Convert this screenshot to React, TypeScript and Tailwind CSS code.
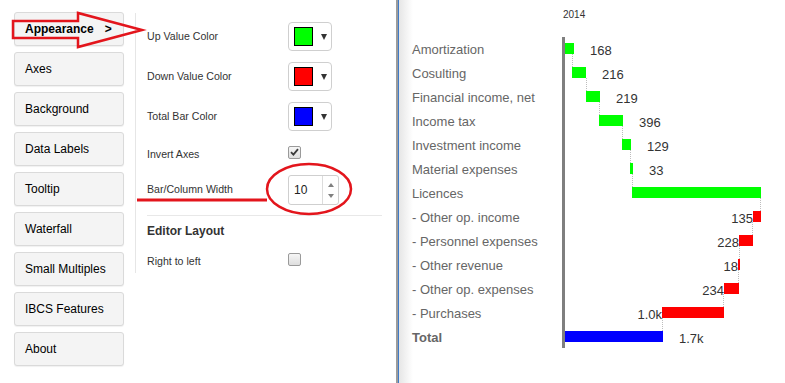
import React from 'react';

const menu = [
  'Appearance',
  'Axes',
  'Background',
  'Data Labels',
  'Tooltip',
  'Waterfall',
  'Small Multiples',
  'IBCS Features',
  'About',
];

type Kind = 'up' | 'down' | 'total';

interface Bar {
  label: string;
  value: string;
  x0: number;
  x1: number;
  kind: Kind;
  showValue?: boolean;
}

// pixel extents of each bar on the chart (axis sits at 565)
const bars: Bar[] = [
  { label: 'Amortization', value: '168', x0: 565, x1: 574, kind: 'up' },
  { label: 'Cosulting', value: '216', x0: 572, x1: 586, kind: 'up' },
  { label: 'Financial income, net', value: '219', x0: 586, x1: 600, kind: 'up' },
  { label: 'Income tax', value: '396', x0: 599, x1: 623, kind: 'up' },
  { label: 'Investment income', value: '129', x0: 622, x1: 631, kind: 'up' },
  { label: 'Material expenses', value: '33', x0: 630, x1: 633, kind: 'up' },
  { label: 'Licences', value: '2.1k', x0: 632, x1: 761, kind: 'up', showValue: false },
  { label: '- Other op. income', value: '135', x0: 753, x1: 761, kind: 'down' },
  { label: '- Personnel expenses', value: '228', x0: 739, x1: 753, kind: 'down' },
  { label: '- Other revenue', value: '18', x0: 738, x1: 740, kind: 'down' },
  { label: '- Other op. expenses', value: '234', x0: 724, x1: 739, kind: 'down' },
  { label: '- Purchases', value: '1.0k', x0: 662, x1: 724, kind: 'down' },
  { label: 'Total', value: '1.7k', x0: 565, x1: 663, kind: 'total' },
];

const AXIS_X = 565;
const ROW_H = 24;

const barColor: Record<Kind, string> = {
  up: 'bg-[#00ff00]',
  down: 'bg-[#ff0000]',
  total: 'bg-[#0000ff]',
};

const Checkbox: React.FC<{ checked?: boolean }> = ({ checked }) => (
  <span className="flex h-[13px] w-[13px] items-center justify-center rounded-[2px] border border-[#9a9a9a] bg-[linear-gradient(#f6f6f6,#dedede)]">
    {checked && (
      <svg width="9" height="8" viewBox="0 0 9 8">
        <path d="M1 4.2 L3.4 6.6 L8 1.2" fill="none" stroke="#3a3a3a" strokeWidth="1.8" />
      </svg>
    )}
  </span>
);

const ColorPicker: React.FC<{ color: string }> = ({ color }) => (
  <div className="flex h-[29px] w-[44px] items-center rounded-[4px] border border-[#cfcfcf] bg-white pl-[5px]">
    <span className={`h-[19px] w-[19px] border border-black ${color}`} />
    <span className="ml-[8px] h-0 w-0 border-x-[3.5px] border-t-[6px] border-x-transparent border-t-[#333]" />
  </div>
);

const SettingRow: React.FC<{ label: string; className?: string; labelClass?: string; children: React.ReactNode }> = ({
  label,
  className = '',
  labelClass = '',
  children,
}) => (
  <div className={`flex items-center ${className}`}>
    <span className={`w-[141px] text-[10.6px] text-[#333] ${labelClass}`}>{label}</span>
    {children}
  </div>
);

const Sidebar: React.FC = () => (
  <div className="flex w-[110px] flex-col gap-[6px]">
    {menu.map((item, i) => (
      <div
        key={item}
        className="flex h-[34px] items-center rounded-[3px] border border-[#dadada] bg-[#f4f4f4] pl-[10px] text-[12px] text-black shadow-[0_1px_1px_rgba(0,0,0,0.06)]"
      >
        {i === 0 ? (
          <>
            <span className="font-bold">{item}</span>
            <span className="ml-[11px] font-bold">&gt;</span>
          </>
        ) : (
          item
        )}
      </div>
    ))}
  </div>
);

const Settings: React.FC = () => (
  <div className="ml-[11px] flex w-[235px] flex-col pt-[10px]">
    <SettingRow label="Up Value Color" className="h-[29px]">
      <ColorPicker color="bg-[#00ff00]" />
    </SettingRow>
    <SettingRow label="Down Value Color" className="mt-[11px] h-[29px]">
      <ColorPicker color="bg-[#ff0000]" />
    </SettingRow>
    <SettingRow label="Total Bar Color" className="mt-[11px] h-[29px]">
      <ColorPicker color="bg-[#0000ff]" />
    </SettingRow>
    <SettingRow label="Invert Axes" className="mt-[10px] h-[22px]" labelClass="pt-[6px]">
      <Checkbox checked />
    </SettingRow>
    <SettingRow label="Bar/Column Width" className="mt-[12px] h-[30px]">
      <div className="flex h-[30px] w-[51px] rounded-[3px] border border-[#cfcfcf] bg-white">
        <span className="flex w-[33px] items-center pl-[5px] text-[12px] text-[#222]">10</span>
        <div className="flex flex-1 flex-col items-center justify-center gap-[7px] border-l border-[#dcdcdc]">
          <span className="h-0 w-0 border-x-[3.5px] border-b-[4px] border-x-transparent border-b-[#808080]" />
          <span className="h-0 w-0 border-x-[3.5px] border-t-[4px] border-x-transparent border-t-[#808080]" />
        </div>
      </div>
    </SettingRow>
    <div className="mt-[10px] h-px w-[235px] bg-[#e8e8e8]" />
    <div className="mt-[8px] text-[12px] font-bold leading-[14px] text-[#333]">Editor Layout</div>
    <SettingRow label="Right to left" className="mt-[10px] h-[22px]" labelClass="pt-[6px]">
      <Checkbox />
    </SettingRow>
  </div>
);

const Chart: React.FC = () => (
  <div className="flex flex-col">
    <div className="h-[37px] pl-[164px] pt-[9px] text-[10px] leading-[12px] text-[#333]">2014</div>
    <div className="flex pl-[13px]">
      <div className="flex w-[150px] flex-col pt-[1px]">
        {bars.map((b) => (
          <div
            key={b.label}
            className={`h-[24px] whitespace-nowrap text-[13px] leading-[24px] text-[#666] ${b.kind === 'total' ? 'font-bold' : ''}`}
          >
            {b.label}
          </div>
        ))}
      </div>
      <div className="h-[311px] w-[3px] bg-[#7f7f7f]" />
      <div className="relative flex-1">
        {bars.map((b, i) => {
          const next = bars[i + 1];
          const cx = next ? (next.kind === 'up' ? next.x0 : next.x1 - 1) : 0;
          return (
            <div key={b.label} className="relative h-[24px]">
              <div
                className={`absolute top-[6px] h-[11px] ${barColor[b.kind]}`}
                style={{ left: b.x0 - AXIS_X, width: b.x1 - b.x0 }}
              />
              {b.showValue !== false && (
                <span
                  className={`absolute top-[2px] whitespace-nowrap text-[13px] leading-[24px] text-[#333] ${b.kind === 'down' ? '-translate-x-full' : ''}`}
                  style={{ left: b.kind === 'down' ? b.x0 - AXIS_X : b.x1 + 16 - AXIS_X }}
                >
                  {b.value}
                </span>
              )}
              {next && (
                <div
                  className="absolute top-[17px] border-l border-dotted border-[#bdbdbd]"
                  style={{ left: cx - AXIS_X, height: ROW_H - 11 }}
                />
              )}
            </div>
          );
        })}
      </div>
    </div>
  </div>
);

export default function App() {
  return (
    <div className="relative flex h-[383px] w-[785px] overflow-hidden bg-white font-['Liberation_Sans',Arial,sans-serif]">
      <div className="flex w-[396px] shrink-0 pl-[14px] pt-[12px]">
        <Sidebar />
        <div className="ml-[11px] mt-[1px] h-[260px] w-px bg-[#e6e6e6]" />
        <Settings />
      </div>
      <div className="w-[2px] shrink-0 bg-[#9c9c9c]" />
      <div className="w-px shrink-0 bg-[#3f7bc8]" />
      <div className="flex-1 bg-[linear-gradient(to_right,#e6e6e6,#ffffff_14px)]">
        <Chart />
      </div>

      {/* red annotations drawn over the editor */}
      <svg className="pointer-events-none absolute left-0 top-0" width="785" height="383" viewBox="0 0 785 383">
        <polygon
          points="13,21 78,21 78,13 142,30 78,47 78,38 13,38"
          fill="none"
          stroke="#e3151c"
          strokeWidth="2.5"
          strokeLinejoin="miter"
        />
        <ellipse cx="309" cy="189" rx="42" ry="25" fill="none" stroke="#e3151c" strokeWidth="2.5" />
        <line x1="137" y1="200" x2="267" y2="200" stroke="#e3151c" strokeWidth="3" />
      </svg>
    </div>
  );
}
